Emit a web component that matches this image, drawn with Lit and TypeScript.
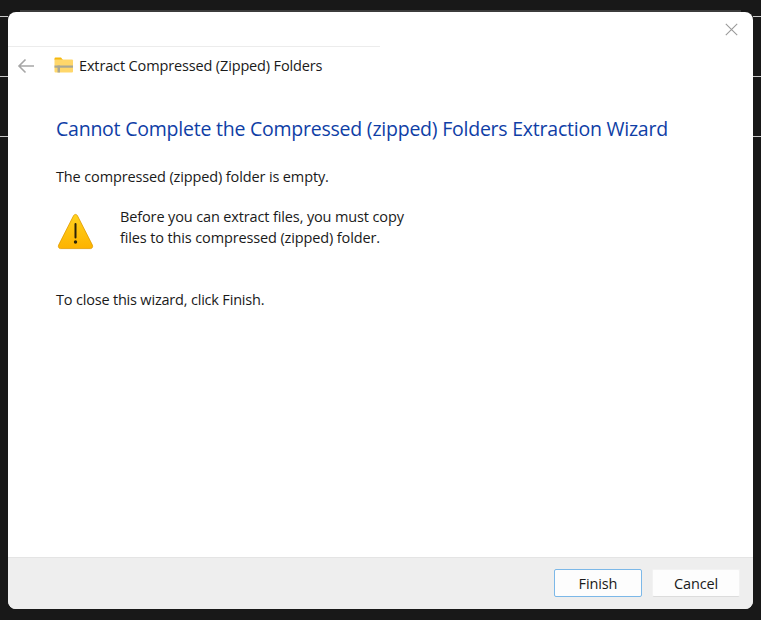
import { LitElement, html, css } from "lit";
import { customElement } from "lit/decorators.js";

@customElement("app-root")
export class AppRoot extends LitElement {
  static styles = css`
    :host {
      display: block;
      position: relative;
      width: 761px;
      height: 620px;
      overflow: hidden;
      box-sizing: border-box;
      padding: 12px 8px 11px 8px;
      background: #181818;
      font-family: "Open Sans", "Noto Sans", sans-serif;
      color: #1a1a1a;
      font-size: 14.5px;
    }
    .rule {
      position: absolute;
      height: 1px;
      width: 8px;
      background: #c8c8c8;
    }
    .rule.right { left: 753px; }
    .rule.left { left: 0; }
    .strip {
      position: absolute;
      left: 20px;
      top: 10px;
      width: 721px;
      height: 2px;
      background: #3c3c3c;
    }
    .window {
      position: relative;
      height: 100%;
      display: flex;
      flex-direction: column;
      background: #fff;
      border-radius: 8px;
      overflow: hidden;
    }
    .close {
      position: absolute;
      right: 15px;
      top: 11px;
      width: 13px;
      height: 13px;
    }
    .topline {
      margin-top: 34px;
      width: 372px;
      height: 1px;
      background: #ececec;
      flex: none;
    }
    .nav {
      display: flex;
      align-items: center;
      height: 38px;
      flex: none;
      padding-left: 9px;
    }
    .back { width: 18px; height: 16px; margin-right: 19px; }
    .folder { width: 20px; height: 16px; margin-right: 5px; margin-top: -2px; }
    .nav-title { font-size: 14.5px; letter-spacing: -0.14px; line-height: 20px; margin-top: -1px; }
    .body {
      flex: 1;
      padding: 0 48px;
      display: flex;
      flex-direction: column;
    }
    h1 {
      margin: 30px 0 0;
      font-weight: 400;
      font-size: 19.5px;
      line-height: 28px;
      letter-spacing: -0.23px;
      color: #0f3ea6;
    }
    p {
      margin: 0;
      font-size: 14.5px;
      line-height: 21px;
      letter-spacing: -0.13px;
    }
    .lead { margin-top: 23px; }
    .warn {
      display: flex;
      margin-top: 19px;
    }
    .warn svg { width: 38px; height: 38px; margin-right: 26px; margin-top: 6px; flex: none; }
    .warn p { width: 310px; }
    .tail { margin-top: 39px; letter-spacing: -0.19px; }
    .footer {
      flex: none;
      height: 40px;
      background: #eeeeee;
      border-top: 1px solid #e4e4e4;
      display: flex;
      justify-content: flex-end;
      align-items: flex-start;
      gap: 10px;
      padding: 11px 13px 0 0;
      box-sizing: content-box;
    }
    button {
      box-sizing: border-box;
      width: 88px;
      height: 28px;
      font: inherit;
      font-size: 14.5px;
      letter-spacing: -0.12px;
      color: #1a1a1a;
      background: #fdfdfd;
      border: 1px solid #f2f2f2;
      border-bottom-color: #dcdcdc;
      border-radius: 2px;
      padding: 0;
    }
    button.primary { border: 1px solid #7cb8e8; }
  `;

  render() {
    return html`
      <div class="rule left" style="top:16px"></div>
      <div class="rule left" style="top:76px"></div>
      <div class="rule left" style="top:136px"></div>
      <div class="rule right" style="top:16px"></div>
      <div class="rule right" style="top:76px"></div>
      <div class="rule right" style="top:136px"></div>
      <div class="strip"></div>
      <div class="window">
        <svg class="close" viewBox="0 0 13 13" fill="none" stroke="#9a9a9a" stroke-width="1.1">
          <path d="M.8.8l11.4 11.4M12.2.8L.8 12.2" />
        </svg>
        <div class="topline"></div>
        <div class="nav">
          <svg class="back" viewBox="0 0 18 16" fill="none" stroke="#a6a6a6" stroke-width="1.6">
            <path d="M17 8H2M8.5 1.5L2 8l6.5 6.5" />
          </svg>
          <svg class="folder" viewBox="0 0 20 16">
            <path d="M.5 1.500A1 1 0 0 1 1.500.5h5.500l2 2.500H.5z" fill="#f5b90f" />
            <rect x=".5" y="2.500" width="18.500" height="13" rx="1" fill="#ffd76a" />
            <rect x=".5" y="8.500" width="18.500" height="2.200" fill="#a9a793" />
            <rect x="3.500" y="8.500" width="2.500" height="7" fill="#a9a793" />
          </svg>
          <span class="nav-title">Extract Compressed (Zipped) Folders</span>
        </div>
        <div class="body">
          <h1>Cannot Complete the Compressed (zipped) Folders Extraction Wizard</h1>
          <p class="lead">The compressed (zipped) folder is empty.</p>
          <div class="warn">
            <svg viewBox="0 0 38 38">
              <defs>
                <linearGradient id="g" x1="0" y1="0" x2="0" y2="1">
                  <stop offset="0" stop-color="#ffd21e" />
                  <stop offset="1" stop-color="#fdb300" />
                </linearGradient>
              </defs>
              <path d="M19.500 2.400c.8 0 1.400.4 1.900 1.200l15 29.500c.7 1.500-.1 3.500-1.800 3.500H4.400c-1.700 0-2.500-2-1.800-3.500l15-29.500c.5-.8 1.100-1.200 1.900-1.200z"
                fill="url(#g)" stroke="#e09a00" stroke-width=".8" />
              <rect x="18.500" y="11" width="2" height="15.500" rx="1" fill="#2a2208" />
              <circle cx="19.500" cy="30" r="1.700" fill="#2a2208" />
            </svg>
            <p>Before you can extract files, you must copy<br />files to this compressed (zipped) folder.</p>
          </div>
          <p class="tail">To close this wizard, click Finish.</p>
        </div>
        <div class="footer">
          <button class="primary">Finish</button>
          <button>Cancel</button>
        </div>
      </div>
    `;
  }
}
